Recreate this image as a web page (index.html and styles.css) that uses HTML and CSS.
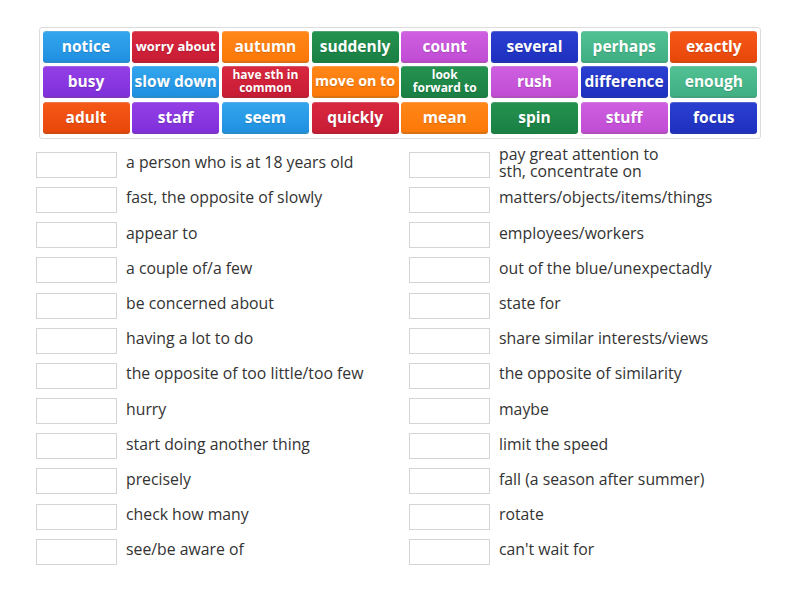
FILE: index.html
```html
<!DOCTYPE html>
<html>
<head>
<meta charset="utf-8">
<link rel="stylesheet" href="styles.css">
</head>
<body>
<div class="bank">
  <div class="tile c-blue">notice</div>
  <div class="tile c-red sm">worry about</div>
  <div class="tile c-orange">autumn</div>
  <div class="tile c-green">suddenly</div>
  <div class="tile c-magenta">count</div>
  <div class="tile c-navy">several</div>
  <div class="tile c-teal">perhaps</div>
  <div class="tile c-ored">exactly</div>

  <div class="tile c-purple">busy</div>
  <div class="tile c-blue">slow down</div>
  <div class="tile c-red xs">have sth in<br>common</div>
  <div class="tile c-orange md">move on to</div>
  <div class="tile c-green xs">look<br>forward to</div>
  <div class="tile c-magenta">rush</div>
  <div class="tile c-navy">difference</div>
  <div class="tile c-teal">enough</div>

  <div class="tile c-ored">adult</div>
  <div class="tile c-purple">staff</div>
  <div class="tile c-blue">seem</div>
  <div class="tile c-red">quickly</div>
  <div class="tile c-orange">mean</div>
  <div class="tile c-green">spin</div>
  <div class="tile c-magenta">stuff</div>
  <div class="tile c-navy">focus</div>
</div>

<div class="pairs">
  <div class="col">
    <div class="row"><div class="box"></div><div class="def">a person who is at 18 years old</div></div>
    <div class="row"><div class="box"></div><div class="def">fast, the opposite of slowly</div></div>
    <div class="row"><div class="box"></div><div class="def">appear to</div></div>
    <div class="row"><div class="box"></div><div class="def">a couple of/a few</div></div>
    <div class="row"><div class="box"></div><div class="def">be concerned about</div></div>
    <div class="row"><div class="box"></div><div class="def">having a lot to do</div></div>
    <div class="row"><div class="box"></div><div class="def">the opposite of too little/too few</div></div>
    <div class="row"><div class="box"></div><div class="def">hurry</div></div>
    <div class="row"><div class="box"></div><div class="def">start doing another thing</div></div>
    <div class="row"><div class="box"></div><div class="def">precisely</div></div>
    <div class="row"><div class="box"></div><div class="def">check how many</div></div>
    <div class="row"><div class="box"></div><div class="def">see/be aware of</div></div>
  </div>
  <div class="col">
    <div class="row"><div class="box"></div><div class="def">pay great attention to<br>sth, concentrate on</div></div>
    <div class="row"><div class="box"></div><div class="def">matters/objects/items/things</div></div>
    <div class="row"><div class="box"></div><div class="def">employees/workers</div></div>
    <div class="row"><div class="box"></div><div class="def">out of the blue/unexpectadly</div></div>
    <div class="row"><div class="box"></div><div class="def">state for</div></div>
    <div class="row"><div class="box"></div><div class="def">share similar interests/views</div></div>
    <div class="row"><div class="box"></div><div class="def">the opposite of similarity</div></div>
    <div class="row"><div class="box"></div><div class="def">maybe</div></div>
    <div class="row"><div class="box"></div><div class="def">limit the speed</div></div>
    <div class="row"><div class="box"></div><div class="def">fall (a season after summer)</div></div>
    <div class="row"><div class="box"></div><div class="def">rotate</div></div>
    <div class="row"><div class="box"></div><div class="def">can't wait for</div></div>
  </div>
</div>
</body>
</html>
```

FILE: styles.css
```css
html, body {
  margin: 0;
  padding: 0;
  background: #fff;
  font-family: "Open Sans", "Liberation Sans", sans-serif;
}

body {
  padding: 27px 0 0 39px;
}

.bank {
  box-sizing: border-box;
  width: 722px;
  border: 1px solid #dcdcdc;
  border-radius: 3px;
  padding: 3px 2.5px 4px 2.5px;
  display: grid;
  grid-template-columns: repeat(8, 87px);
  grid-auto-rows: 32px;
  column-gap: 2.7px;
  row-gap: 3.4px;
}

.tile {
  box-sizing: border-box;
  border-radius: 3px;
  color: #fff;
  font-weight: 700;
  font-size: 15.5px;
  line-height: 18px;
  display: flex;
  align-items: center;
  justify-content: center;
  text-align: center;
  white-space: nowrap;
  text-shadow: 0 1px 1px rgba(0,0,0,0.15);
  border-top: 1px solid rgba(255,255,255,0.25);
  border-bottom: 2px solid rgba(0,0,0,0.15);
  padding-bottom: 1px;
}

.tile.sm { font-size: 13px; }
.tile.md { font-size: 14.3px; }
.tile.xs { font-size: 12px; line-height: 13px; }

.c-blue    { background: linear-gradient(#33a6ee, #1f90e0); }
.c-red     { background: linear-gradient(#d8283f, #c81c35); }
.c-orange  { background: linear-gradient(#ff8718, #fb7808); }
.c-green   { background: linear-gradient(#24924f, #1a8044); }
.c-magenta { background: linear-gradient(#cf60e0, #c04cd4); }
.c-navy    { background: linear-gradient(#2a3fd0, #1f30c0); }
.c-teal    { background: linear-gradient(#51c093, #40b084); }
.c-ored    { background: linear-gradient(#f65818, #e8470a); }
.c-purple  { background: linear-gradient(#943fe6, #8030da); }

.pairs {
  display: grid;
  grid-template-columns: 373px 373px;
  margin-top: 13px;
  margin-left: -3px;
}

.col {
  display: flex;
  flex-direction: column;
  gap: 9.2px;
}

.row {
  display: flex;
  align-items: center;
  height: 26px;
  gap: 9px;
}

.box {
  box-sizing: border-box;
  width: 81px;
  height: 26px;
  flex: none;
  border: 1px solid #d4d4d4;
  background: #fff;
}

.def {
  font-size: 15.8px;
  line-height: 17px;
  color: #333;
  white-space: nowrap;
  margin-bottom: 4px;
}
```
